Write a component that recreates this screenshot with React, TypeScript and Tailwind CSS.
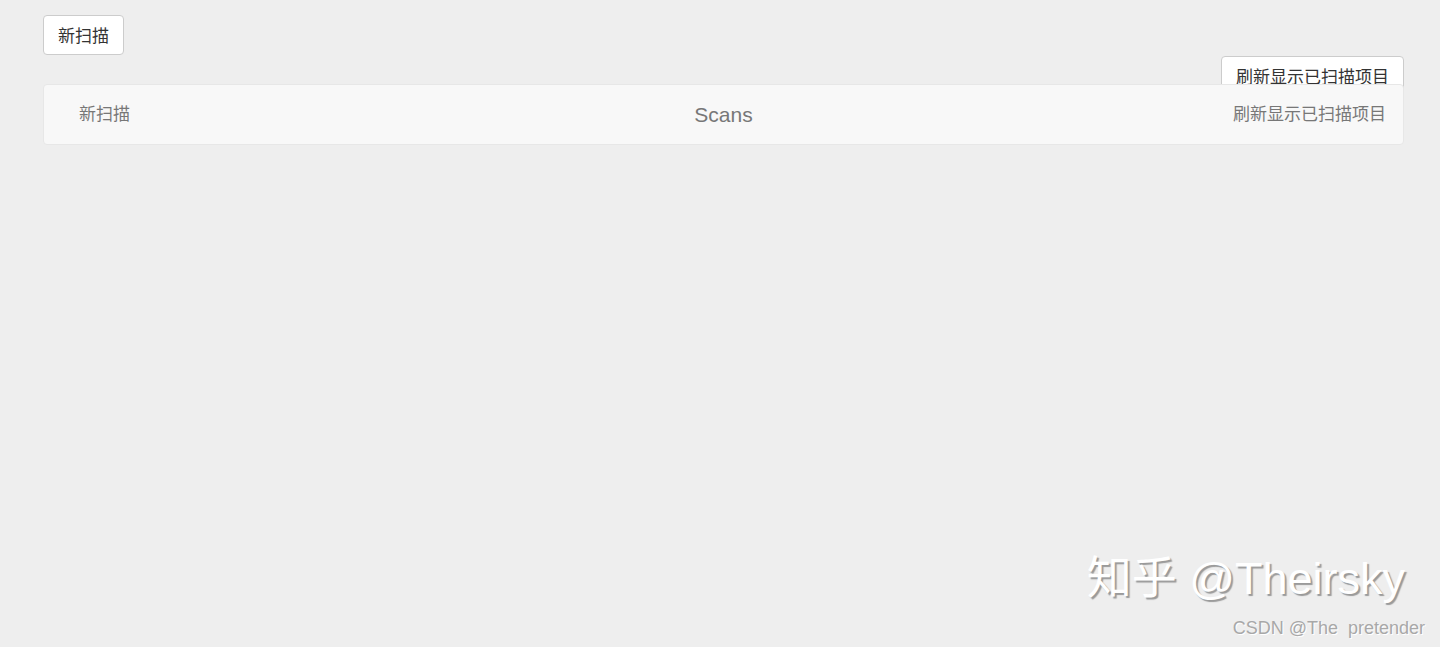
import React from "react";

const cjk = { fontFamily: '"Liberation Sans", "Noto Sans CJK SC", sans-serif' };

export default function App() {
  return (
    <div className="relative min-h-screen w-full overflow-hidden bg-[#eeeeee]" style={cjk}>
      <div className="pl-[43px] pr-[36px] pt-[15px]">
        {/* top button */}
        <div className="flex">
          <button className="h-[40px] rounded-[4px] border border-[#cccccc] bg-white px-[14px] pt-[3px] text-[17px] text-[#333333]">
            新扫描
          </button>
        </div>

        {/* refresh button, partly hidden behind the panel */}
        <div className="flex justify-end pt-px">
          <button className="h-[40px] rounded-[4px] border border-[#cccccc] bg-white px-[14px] pt-[3px] text-[17px] text-[#333333]">
            刷新显示已扫描项目
          </button>
        </div>

        {/* navbar panel */}
        <div className="relative z-10 -mt-[12px] grid h-[61px] grid-cols-3 items-center rounded-[4px] border border-[#e7e7e7] bg-[#f8f8f8] px-[17px]">
          <span className="pl-[18px] text-[17px] text-[#777777]">新扫描</span>
          <span className="text-center text-[21px] text-[#777777]">Scans</span>
          <span className="text-right text-[17px] text-[#777777]">刷新显示已扫描项目</span>
        </div>
      </div>

      {/* watermarks */}
      <div className="absolute right-[35px] top-[556px] text-[45px] leading-none text-white [text-shadow:2px_2px_1px_#9a9a9a]">
        知乎 @Theirsky
      </div>
      <div className="absolute right-[15px] top-[619px] whitespace-pre text-[18px] leading-none text-[#a8a8a8] [text-shadow:1px_1px_0_#ffffff]">
        CSDN @The  pretender
      </div>
    </div>
  );
}
